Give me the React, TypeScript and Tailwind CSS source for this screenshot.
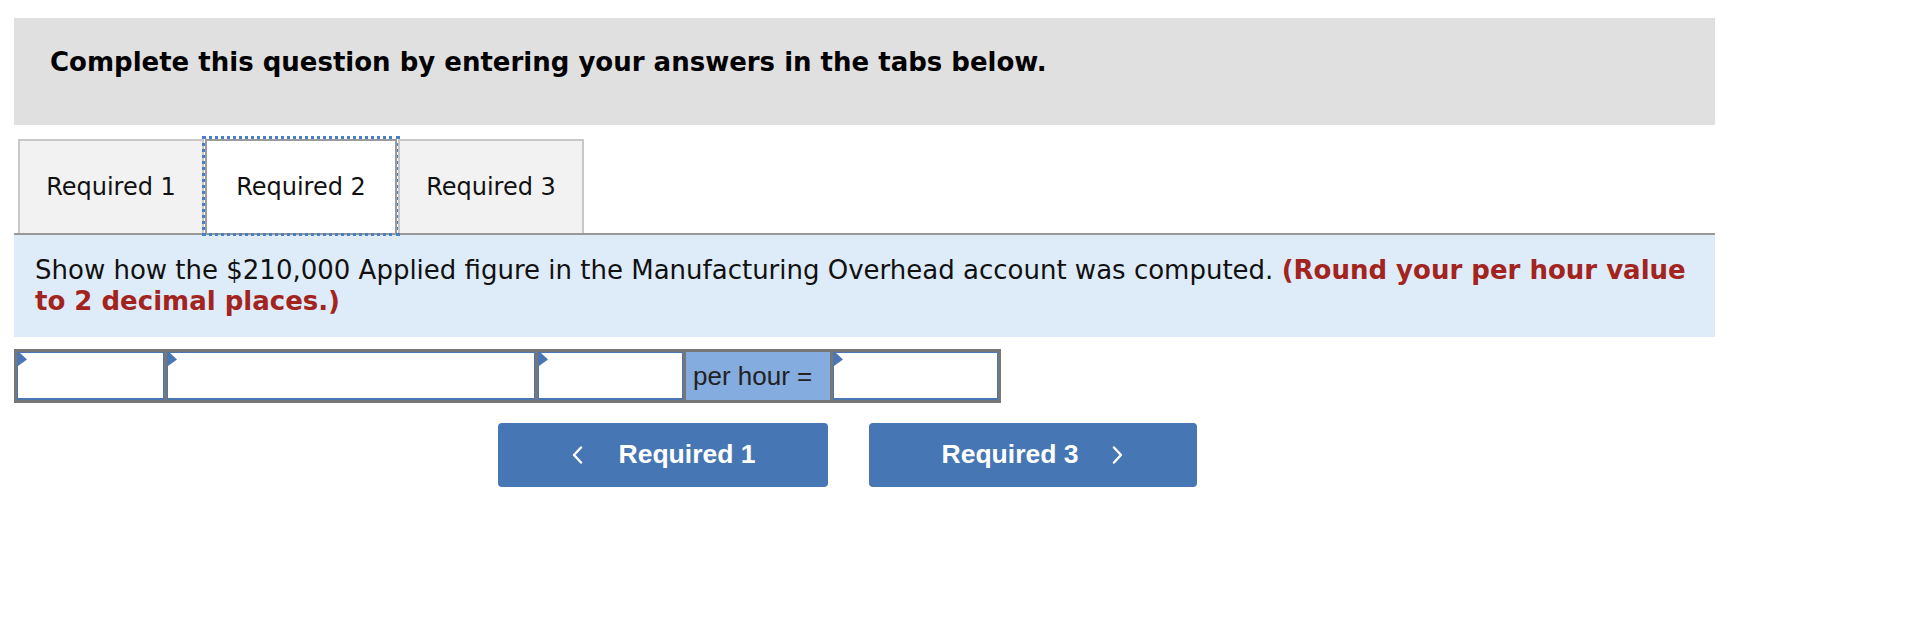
import React from 'react';

const Flag: React.FC = () => (
    <svg className="absolute left-px top-px" width="10" height="13" viewBox="0 0 10 13">
        <polygon points="0,0 2,0 9,6.5 0,13" fill="#4a76b5" />
    </svg>
);

const AnswerCell: React.FC<{ width: string; first?: boolean }> = ({ width, first }) => (
    <div className={`relative h-full ${width} ${first ? '' : 'border-l-[3px] border-[#777]'}`}>
        <input
            type="text"
            className="w-full h-full border border-b-2 border-[#4a76b5] bg-white outline-none"
        />
        <Flag />
    </div>
);

const Chevron: React.FC<{ dir: 'left' | 'right' }> = ({ dir }) => (
    <svg width="13" height="18" viewBox="0 0 13 18" fill="none">
        <polyline
            points={dir === 'left' ? '10,1.5 3,9 10,16.5' : '3,1.5 10,9 3,16.5'}
            stroke="white"
            strokeWidth="2.4"
            strokeLinecap="round"
            strokeLinejoin="round"
        />
    </svg>
);

const App: React.FC = () => {
    const tabs = ['Required 1', 'Required 2', 'Required 3'];
    const active = 1;

    return (
        <div className="min-h-[622px] bg-white pt-[18px] pl-[14px] font-['DejaVu_Sans',sans-serif] text-black">
            <div className="w-[1701px]">
                {/* Instructions */}
                <div className="h-[107px] bg-[#e0e0e0] pt-[28px] pl-[36px]">
                    <p className="text-[26px] leading-[32px] font-bold">
                        Complete this question by entering your answers in the tabs below.
                    </p>
                </div>

                {/* Tabs */}
                <div className="flex items-end gap-px pl-[4px] mt-[14px] h-[94px]">
                    {tabs.map((t, i) => (
                        <button
                            key={t}
                            className={
                                i === active
                                    ? 'h-[94px] w-[192px] bg-white border-2 border-b-0 border-[#9b9b9b] outline-[3px] outline-dotted outline-[#4a7fc1] text-[24px] text-[#111]'
                                    : 'h-[94px] w-[186px] bg-[#f2f2f2] border-2 border-b-0 border-[#c8c8c8] text-[24px] text-[#111]'
                            }
                        >
                            {t}
                        </button>
                    ))}
                </div>

                {/* Prompt */}
                <div className="border-t-2 border-[#999] bg-[#deebf8] h-[104px] pt-[20px] px-[21px]">
                    <p className="text-[26px] leading-[31px] text-[#111]">
                        Show how the $210,000 Applied figure in the Manufacturing Overhead account was computed.{' '}
                        <span className="font-bold text-[#a3241e]">
                            (Round your per hour value
                            <br />
                            to 2 decimal places.)
                        </span>
                    </p>
                </div>

                {/* Answer row */}
                <div className="mt-[12px] flex h-[54px] w-[987px] border-[3px] border-[#777]">
                    <AnswerCell width="w-[147px]" first />
                    <AnswerCell width="w-[371px]" />
                    <AnswerCell width="w-[148px]" />
                    <div className="h-full w-[147px] border-l-[3px] border-[#777] bg-[#84acdf] pl-[7px] flex items-center font-['Liberation_Sans',Arial,sans-serif] text-[26px] text-[#222]">
                        per hour =
                    </div>
                    <AnswerCell width="w-[168px]" />
                </div>

                {/* Navigation */}
                <div className="mt-[20px] flex gap-[41px] pl-[484px] font-['Liberation_Sans',Arial,sans-serif]">
                    <button className="flex h-[64px] w-[330px] items-center justify-center gap-[35px] rounded-[4px] bg-[#4677b4] text-[26.5px] font-bold text-white">
                        <Chevron dir="left" />
                        <span>Required 1</span>
                    </button>
                    <button className="flex h-[64px] w-[328px] items-center justify-center gap-[33px] rounded-[4px] bg-[#4677b4] text-[26.5px] font-bold text-white">
                        <span>Required 3</span>
                        <Chevron dir="right" />
                    </button>
                </div>
            </div>
        </div>
    );
};

export default App;
